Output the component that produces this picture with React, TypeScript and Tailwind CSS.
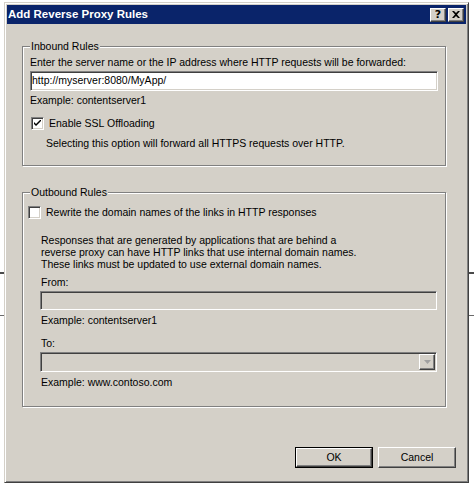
const sunken =
  "border border-t-[#808080] border-l-[#808080] border-b-white border-r-white shadow-[inset_1px_1px_0_#404040,inset_-1px_-1px_0_#d4d0c8]";
const raised =
  "border border-t-white border-l-white border-b-[#404040] border-r-[#404040] shadow-[inset_-1px_-1px_0_#808080]";
const etched =
  "border border-[#808080] shadow-[inset_1px_1px_0_#fff,1px_1px_0_#fff]";

const CheckBox = ({ checked }: { checked?: boolean }) => (
  <div className={`w-[13px] h-[13px] shrink-0 bg-white ${sunken} flex items-center justify-center`}>
    {checked && (
      <svg width="7" height="7" viewBox="0 0 7 7">
        <path d="M0 2 L0 4 L2 6 L7 1 L7 -1 L2 4 Z" fill="#000" />
      </svg>
    )}
  </div>
);

const Legend = ({ children }: { children: React.ReactNode }) => (
  <legend className="px-[1px] leading-[13px] bg-[#d4d0c8]">{children}</legend>
);

export default function App() {
  return (
    <div className="relative w-[474px] h-[489px] bg-white overflow-hidden font-['Liberation_Sans',Arial,sans-serif] text-[10.5px] text-black">
      {/* background window lines behind the dialog */}
      <div className="absolute left-0 right-0 top-[272px] h-[2px] bg-[#4a4a4a]" />
      <div className="absolute left-0 right-0 top-[315px] h-[1px] bg-[#6a6a6a]" />

      <div
        className={`relative ml-[4px] mt-[2px] w-[465px] h-[481px] flex flex-col p-[2px] bg-[#d4d0c8] border border-t-[#d4d0c8] border-l-[#d4d0c8] border-r-[#404040] border-b-[#404040] shadow-[inset_1px_1px_0_#fff,inset_-1px_-1px_0_#808080]`}
      >
        {/* title bar */}
        <div className="h-[19px] bg-[#0a246a] flex items-center pl-[1px] pr-[2px]">
          <span className="text-white font-bold text-[11.5px] leading-none">Add Reverse Proxy Rules</span>
          <div className="ml-auto flex gap-[2px]">
            <div className={`w-[16px] h-[14px] bg-[#d4d0c8] ${raised} flex items-center justify-center`}>
              <span className="font-bold text-[11px] leading-none font-['DejaVu_Sans',sans-serif]">?</span>
            </div>
            <div className={`w-[16px] h-[14px] bg-[#d4d0c8] ${raised} flex items-center justify-center`}>
              <svg width="8" height="7" viewBox="0 0 8 7">
                <path d="M0 0 L2 0 L4 2 L6 0 L8 0 L5 3.5 L8 7 L6 7 L4 5 L2 7 L0 7 L3 3.5 Z" fill="#000" />
              </svg>
            </div>
          </div>
        </div>

        {/* body */}
        <div className="flex-1 flex flex-col pl-[15px] pr-[10px] pt-[16px] pb-[12px]">
          <fieldset className={`mr-[10px] px-[7px] pb-[15px] ${etched}`}>
            <Legend>Inbound Rules</Legend>
            <p className="mt-[3px] leading-[13px]">
              Enter the server name or the IP address where HTTP requests will be forwarded:
            </p>
            <div className={`mt-[2px] h-[20px] bg-white ${sunken} flex items-center pl-[1px]`}>
              http://myserver:8080/MyApp/
            </div>
            <p className="mt-[3px] leading-[13px]">Example: contentserver1</p>
            <div className="mt-[10px] flex items-center ml-[1px] h-[13px]">
              <CheckBox checked />
              <span className="ml-[5px] leading-[13px]">Enable SSL Offloading</span>
            </div>
            <p className="mt-[7px] pl-[16px] leading-[13px]">
              Selecting this option will forward all HTTPS requests over HTTP.
            </p>
          </fieldset>

          <fieldset className={`mt-[20px] mr-[10px] px-[7px] pb-[17px] ${etched}`}>
            <Legend>Outbound Rules</Legend>
            <div className="mt-[7px] flex items-center -ml-[2px] h-[13px]">
              <CheckBox />
              <span className="ml-[5px] leading-[13px]">Rewrite the domain names of the links in HTTP responses</span>
            </div>
            <div className="ml-[10px] mr-[1px]">
              <p className="mt-[15px] pl-[1px] leading-[12px]">
                Responses that are generated by applications that are behind a
                <br />
                reverse proxy can have HTTP links that use internal domain names.
                <br />
                These links must be updated to use external domain names.
              </p>
              <p className="mt-[6px] pl-[1px] leading-[13px]">From:</p>
              <div className={`mt-[2px] h-[19px] bg-[#d4d0c8] ${sunken}`} />
              <p className="mt-[4px] pl-[1px] leading-[13px]">Example: contentserver1</p>
              <p className="mt-[10px] pl-[1px] leading-[13px]">To:</p>
              <div className={`mt-[2px] h-[20px] bg-[#d4d0c8] ${sunken} flex items-center justify-end pr-[1px]`}>
                <div className={`w-[16px] h-[16px] bg-[#d4d0c8] ${raised} flex items-center justify-center`}>
                  <svg width="7" height="4" viewBox="0 0 7 4">
                    <path d="M0 0 L7 0 L3.5 4 Z" fill="#a0a0a0" />
                  </svg>
                </div>
              </div>
              <p className="mt-[4px] pl-[1px] leading-[13px]">Example: www.contoso.com</p>
            </div>
          </fieldset>

          <div className="mt-auto flex justify-end gap-[5px]">
            <button className="w-[78px] h-[21px] border border-black bg-[#d4d0c8] p-0">
              <div className={`w-full h-full ${raised} flex items-center justify-center leading-none`}>OK</div>
            </button>
            <button className={`w-[78px] h-[21px] bg-[#d4d0c8] ${raised} flex items-center justify-center leading-none`}>
              Cancel
            </button>
          </div>
        </div>
      </div>
    </div>
  );
}
